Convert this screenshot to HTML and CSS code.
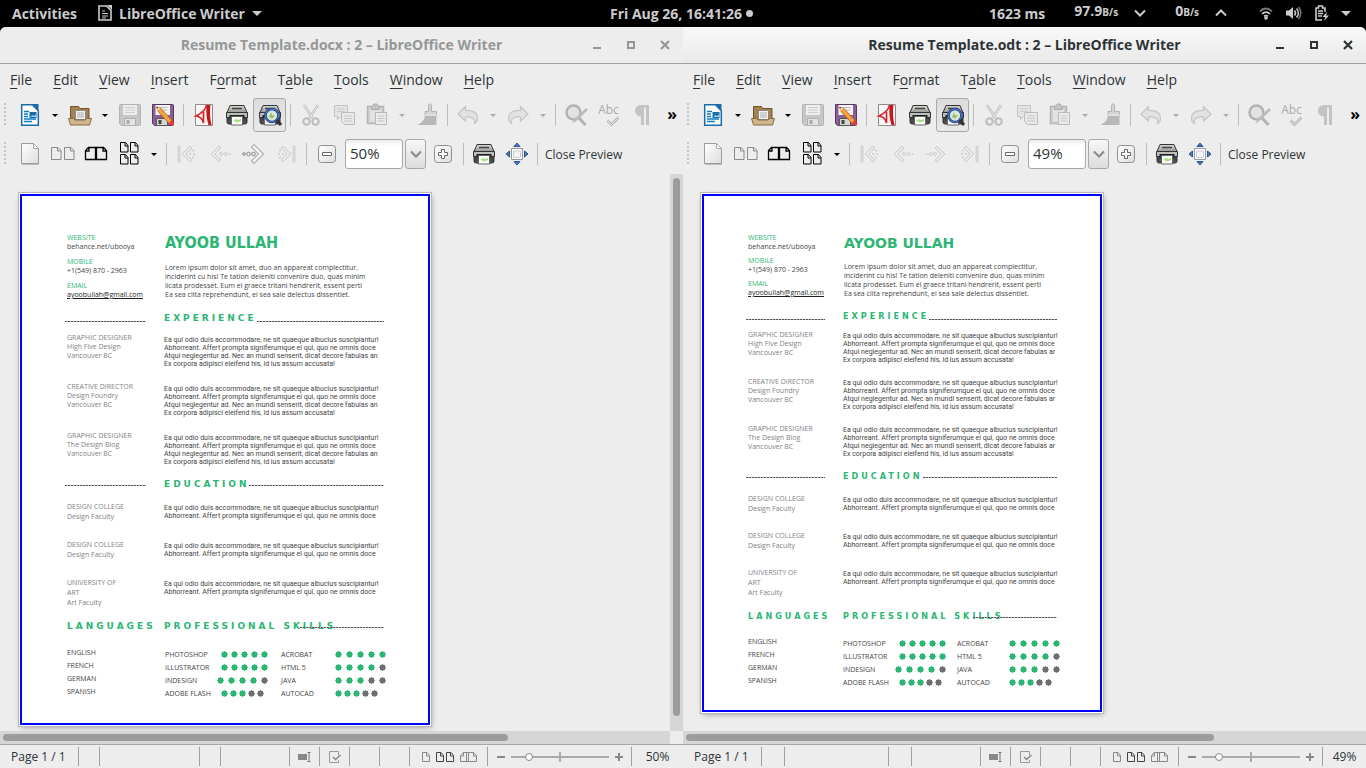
FILE: index.html
```
<!DOCTYPE html>
<html lang="en">
<head>
  <meta charset="UTF-8" />
  <title>Resume Template - LibreOffice Writer</title>
  <link rel="stylesheet" href="styles.css">
</head>
<body>
  <!-- Icon sprite, shared by both windows -->
  <svg class="sprite" aria-hidden="true">
    <defs>
      <linearGradient id="gPaper" x1="0" y1="0" x2="1" y2="1"><stop offset="0" stop-color="#fff"/><stop offset="1" stop-color="#ddd"/></linearGradient>
      <linearGradient id="gPrinter" x1="0" y1="0" x2="0" y2="1"><stop offset="0" stop-color="#d8d8d4"/><stop offset=".45" stop-color="#8a8c86"/><stop offset=".5" stop-color="#333"/><stop offset="1" stop-color="#555"/></linearGradient>
    </defs>
    <symbol id="i-new" viewBox="0 0 24 24">
      <path d="M3.7 1.7h10.600l6 6v14.600H3.700z" fill="#fff" stroke="#1b6ca8" stroke-width="1.500"/>
      <path d="M14 1h6.500v7z" fill="#1b6ca8"/>
      <path d="M6 8.500h5M6 11h4M6 13.500h4M6 16h12M6 18.500h8" stroke="#0c7fc4" stroke-width="1.300"/>
      <path d="M11.500 9h7v6h-7z" fill="#1b6ca8"/><path d="M12.500 14l2-2 1.500 1 2-1.500v2.500z" fill="#9fd3f2"/>
    </symbol>
    <symbol id="i-open" viewBox="0 0 24 24">
      <path d="M2.500 18V3.500h8l1.500 2h9V18z" fill="#a5814f" stroke="#6f5430"/>
      <path d="M7.500 7.500h10v9h-10z" fill="#f4f4f4" stroke="#888"/>
      <path d="M9 10h7M9 12h7M9 14h7" stroke="#aaa"/>
      <path d="M.5 15.500h5l1.500 1.500h10l1.500-1.500h5l-2 6.500h-19z" fill="#d1b48d" stroke="#8a6c42"/>
    </symbol>
    <symbol id="i-save" viewBox="0 0 24 24">
      <path d="M2.500 1.500h19a1 1 0 0 1 1 1v19a1 1 0 0 1-1 1h-18l-2-2v-18a1 1 0 0 1 1-1z" fill="#c6c6c6" stroke="#b3b3b3"/>
      <path d="M5 2h14v10H5z" fill="#ededed"/><path d="M7 4.500h10M7 7h10M7 9.500h10" stroke="#cfcfcf"/>
      <path d="M6.500 15.500h11v7h-11z" fill="#e4e4e4" stroke="#b0b0b0"/><path d="M8.500 17h3v4h-3z" fill="#a9a9a9"/>
    </symbol>
    <symbol id="i-saveas" viewBox="0 0 24 24">
      <path d="M1.500 1.500h20a1 1 0 0 1 1 1v19a1 1 0 0 1-1 1h-18l-2-2z" fill="#875f95" stroke="#5c3566"/>
      <path d="M4.500 2h14.500v10H4.500z" fill="#f4f4f4"/><path d="M6.500 4.500h10M6.500 7h10" stroke="#bbb"/>
      <path d="M5.500 15.500h11v7h-11z" fill="#d3d7cf" stroke="#555"/><path d="M7.500 17h3v4h-3z" fill="#444"/>
      <path d="M5.500 4l4.500 1.500L22 18.500 19.500 22 7.500 9z" fill="#f8a13c" stroke="#b35d0c" stroke-width=".8"/>
      <path d="M5.500 4l3.800 1.200L6.700 8z" fill="#f5deb3"/><path d="M5.500 4l1.600.5-1.100 1.200z"/>
      <path d="M20.500 17l2.800 3-1.300 2.500h-2.500L18 20z" fill="#e23b3b"/>
    </symbol>
    <symbol id="i-pdf" viewBox="0 0 24 24">
      <path d="M3.500 1.500h17v21h-17z" fill="#f7f7f7" stroke="#8c8c8c"/>
      <path d="M14.500 2C14 6.500 11 9.500 4 13c4 .500 6.500 3 7.500 7V9" fill="none" stroke="#d9252a" stroke-width="1.700"/>
      <path d="M14.500 2h4c-1 6-.5 14 1 20h-3C14.500 16 14 9 14.500 2z" fill="#c9161c"/>
    </symbol>
    <symbol id="i-print" viewBox="0 0 24 24">
      <path d="M5 2.500h14l3 7v9.500a2 2 0 0 1-2 2H4a2 2 0 0 1-2-2V9.500z" fill="url(#gPrinter)" stroke="#333"/>
      <path d="M1.500 9.500h21v5h-21z" fill="#bbbdb6" stroke="#2e3436"/>
      <path d="M7 5.500h10" stroke="#444" stroke-width="1.500"/><path d="M4.500 12h15v2.500h-15z" fill="#222"/>
      <path d="M6.500 13.500h11v8.500h-11z" fill="#fafcf8" stroke="#666"/><path d="M8.500 17.500l3-1.500 1.500 1 3-1v2l-4 1.500z" fill="#a6db82"/>
    </symbol>
    <symbol id="i-preview" viewBox="0 0 24 24">
      <use href="#i-print"/>
      <circle cx="14" cy="12.500" r="6.500" fill="#dbe6d4" stroke="#20408f" stroke-width="2.600"/>
      <circle cx="14" cy="12.500" r="6.500" fill="none" stroke="#6b90d8" stroke-width=".8"/>
      <path d="M11 14l2-4.500 1.500 3 2.500-.5-2.500 3.500z" fill="#8cc466"/>
      <path d="M18.500 17l4.500 5" stroke="#333" stroke-width="3"/>
    </symbol>
    <symbol id="i-cut" viewBox="0 0 24 24">
      <path d="M5 2l8.500 13M19 2l-8.500 13" stroke="#c2c2c2" stroke-width="2.600"/><path d="M5 2l8.500 13M19 2l-8.500 13" stroke="#e6e6e6"/>
      <circle cx="7.500" cy="18.500" r="3.200" fill="none" stroke="#bbb" stroke-width="2"/><circle cx="16.500" cy="18.500" r="3.200" fill="none" stroke="#bbb" stroke-width="2"/>
    </symbol>
    <symbol id="i-copy" viewBox="0 0 24 24">
      <path d="M2.500 2.500h13v11h-7l-3 3v-3h-3z" fill="#e4e4e4" stroke="#c2c2c2"/><path d="M5 6h8M5 8.500h8" stroke="#c8c8c8"/>
      <path d="M9.500 9.500h13v12h-10l-3-3z" fill="#e8e8e8" stroke="#bcbcbc"/><path d="M12 13h8M12 15.500h8M12 18h8" stroke="#c8c8c8"/>
    </symbol>
    <symbol id="i-paste" viewBox="0 0 24 24">
      <path d="M2.500 3.500h16v17h-16z" fill="#d0d0d0" stroke="#b5b5b5" stroke-width="1.500"/>
      <path d="M5 5.500h11v13H5z" fill="#e2e2e2"/><path d="M6.500 3.500c1-1 2-1 2.500-2.500h3c.5 1.500 1.500 1.500 2.500 2.500v3h-8z" fill="#c4c4c4" stroke="#aaa"/>
      <path d="M10.500 9.500h11v12h-11z" fill="#ececec" stroke="#b8b8b8"/><path d="M12.500 13h7M12.500 15.500h7M12.500 18h7" stroke="#c4c4c4"/>
    </symbol>
    <symbol id="i-brush" viewBox="0 0 24 24">
      <path d="M13.500 2.500c0-2 3-2 3 0v6h5v4H10v-4h3.500z" fill="#d4d4d4" stroke="#b2b2b2"/>
      <path d="M10 12.500h11.500v9.500H2.500c4-2 7-5 7.500-9.500z" fill="#b8b8b8"/><path d="M10 12h11.500" stroke="#e8e8e8" stroke-width="1.500"/>
    </symbol>
    <symbol id="i-undo" viewBox="0 0 24 24">
      <path d="M9.500 3.500v4c7-.500 12 2 12 8 0 2.500-1 4-3 5 1.500-5-3-7-9-6.500v4L2 11z" fill="#e2e2e2" stroke="#c5c5c5" stroke-width="1.200"/>
    </symbol>
    <symbol id="i-find" viewBox="0 0 24 24">
      <circle cx="9.500" cy="9.500" r="7" fill="#e2e2e2" stroke="#b2b2b2" stroke-width="2.500"/>
      <path d="M15 15l6.500 7" stroke="#b2b2b2" stroke-width="3"/><path d="M22 5L11 16l-3 5 5-3.500L24 7z" fill="#bcbcbc"/>
    </symbol>
    <symbol id="i-tick" viewBox="0 0 14 11"><path d="M1.500 4.500l4 4 7-7" fill="none" stroke="#b9b9b9" stroke-width="2.800"/><path d="M1.500 4.500l4 4 7-7" fill="none" stroke="#e4e4e4"/></symbol>
    <symbol id="i-pilcrow" viewBox="0 0 24 24"><path d="M19 2v20h-3V4.500h-2V22h-3V13.500C3 13.500 3 2 11 2z" fill="#c3c3c3"/></symbol>
    <symbol id="i-page" viewBox="0 0 24 24">
      <path d="M3.500 1.500h12l5 5v15h-17z" fill="url(#gPaper)" stroke="#9c9c9c"/><path d="M15.500 1.500v5h5z" fill="#fff" stroke="#aaa"/><path d="M4 22.500h17" stroke="#bbb"/>
    </symbol>
    <symbol id="i-two" viewBox="0 0 24 24">
      <path d="M.5 5.500h6.500l3 3v9H.5zM13.500 5.500H20l3 3v9h-9.500zM6.500 5.500v3.500h3.500M19.500 5.500v3.500H23" fill="none" stroke="currentColor"/>
    </symbol>
    <symbol id="i-book" viewBox="0 0 24 24">
      <path d="M11.500 5.500H4.500l-3 3v9h10zM12.500 5.500h7l3 3v9h-10zM5 5.500v3.500H1.500M19 5.500v3.500h3.500" fill="none" stroke="#000" stroke-width="1.300"/>
    </symbol>
    <symbol id="i-four" viewBox="0 0 24 24">
      <path d="M3.500.5h5l2.500 3v6.500H3.500zM13.500.5h5l2.500 3v6.500h-7.500zM3.500 12.500h5l2.500 3V22H3.500zM13.500 12.500h5l2.500 3V22h-7.500zM8 .5V4h3M18 .5V4h3M8 12.500V16h3M18 12.500V16h3" fill="none" stroke="#000"/>
    </symbol>
    <symbol id="i-first" viewBox="0 0 24 24">
      <path d="M3 4h2v16H3z" fill="#ddd" stroke="#ccc" stroke-width=".8"/>
      <path d="M15 4l-8 8 8 8 2-2-6-6 6-6z" fill="#e8e8e8" stroke="#ccc"/>
      <path d="M15 12h.1M19 12h.1M18 8.500h.1M18 15.500h.1" stroke="#ccc" stroke-width="2" stroke-linecap="round"/>
    </symbol>
    <symbol id="i-prev" viewBox="0 0 24 24">
      <path d="M11 4l-8 8 8 8 2-2-6-6 6-6z" fill="#e8e8e8" stroke="#ccc"/>
      <circle cx="13" cy="12" r="1.500" fill="none" stroke="#ccc"/><circle cx="17.500" cy="12" r="1.500" fill="none" stroke="#ccc"/><circle cx="21.500" cy="12" r="1" fill="#ccc"/>
    </symbol>
    <symbol id="i-next" viewBox="0 0 24 24">
      <path d="M13 2.500l9.500 9.500-9.500 9.500-2.500-2.500 7-7-7-7z" fill="#f4f4f4" stroke="currentColor"/>
      <circle cx="3" cy="12" r="1.300" fill="none" stroke="currentColor"/><circle cx="7.500" cy="12" r="1.800" fill="none" stroke="currentColor"/><circle cx="12.500" cy="12" r="1.800" fill="none" stroke="currentColor"/>
    </symbol>
    <symbol id="i-minus" viewBox="0 0 20 20">
      <rect x="1.500" y="1.500" width="17" height="17" rx="3" fill="url(#gPaper)" stroke="#8f8f8f"/><path d="M5.500 8.500h9v3h-9z" fill="#fff" stroke="#666"/>
    </symbol>
    <symbol id="i-plus" viewBox="0 0 20 20">
      <rect x="1.500" y="1.500" width="17" height="17" rx="3" fill="url(#gPaper)" stroke="#8f8f8f"/>
      <path d="M8.500 5.500h3v3h3v3h-3v3h-3v-3h-3v-3h3z" fill="#fff" stroke="#666"/>
    </symbol>
    <symbol id="i-fit" viewBox="0 0 24 24">
      <path d="M6.500 6.500h11v11h-11z" fill="#fff" stroke="#999"/><path d="M8.500 9h7v6.500h-7z" fill="#f4f4f4" stroke="#ccc"/>
      <path d="M12 1l3 3.500H9zM12 23l3-3.500H9zM1 12l3.500-3v6zM23 12l-3.500-3v6z" fill="#4b78b8" stroke="#2c5594" stroke-linejoin="round"/>
    </symbol>
    <symbol id="i-chevron" viewBox="0 0 12 12"><path d="M1 3.500l5 5 5-5" fill="none" stroke="currentColor" stroke-width="2"/></symbol>
    <symbol id="i-star" viewBox="0 0 10 10"><path d="M5 0l1.300 1.200L8.500 1.500l.3 2.200L10 5 8.800 6.300l-.3 2.200-2.200.3L5 10 3.700 8.800l-2.200-.3-.3-2.200L0 5l1.200-1.300.3-2.200 2.200-.3z" fill="currentColor"/></symbol>
    <symbol id="s-insert" viewBox="0 0 13 12"><path d="M0 3h9v6H0z" fill="#888"/><path d="M9.500 1.500h3M11 1.500v9M9.500 10.500h3" stroke="#777"/></symbol>
    <symbol id="s-sign" viewBox="0 0 12 12"><path d="M9.500 4V.500h-9v11h9V9" fill="none" stroke="#999"/><path d="M4 6l2.500 2.500L11.500 4" fill="none" stroke="#888" stroke-width="1.500"/></symbol>
    <symbol id="s-page" viewBox="0 0 8 10"><path d="M.5.500H5l2.500 3v6h-7zM4.500.500V4h3" fill="none" stroke="currentColor"/></symbol>
    <symbol id="s-book" viewBox="0 0 17 10"><path d="M8.500.500H3.500L.5 3.500v6h8zM8.500.500h5l3 3v6h-8zM3.500.500V4H.5M13.500.500V4h3M6.500 0v10" fill="none" stroke="currentColor"/></symbol>
  </svg>

  <!-- GNOME top bar -->
  <header class="topbar">
    <div class="topbar-left">
      <button>Activities</button>
      <button class="app-menu">
        <svg width="14" height="16" viewBox="0 0 14 16"><path d="M1 1h7.500L13 5.500V15H1z" fill="none" stroke="#ccc" stroke-width="1.600"/><path d="M9 0h5v5z" fill="#ccc"/><path d="M4 6h3M4 8.500h6M4 11h6M4 13h4" stroke="#ccc"/></svg>
        LibreOffice Writer
        <span class="caret"></span>
      </button>
    </div>
    <button class="clock">Fri Aug 26, 16:41:26<span class="clock-dot"></span></button>
    <div class="topbar-right">
      <span>1623 ms</span>
      <span class="net down">97.9<small>B/s</small></span>
      <svg width="12" height="12"><use href="#i-chevron"/></svg>
      <span class="net up">0<small>B/s</small></span>
      <svg class="flip" width="12" height="12"><use href="#i-chevron"/></svg>
      <svg class="wifi" width="14" height="14" viewBox="0 0 14 14"><path d="M1 5.500c3.500-4 8.500-4 12 0" fill="none" stroke="#777" stroke-width="1.800"/><path d="M3 8c2.500-2.500 5.500-2.500 8 0M5 10.300c1.300-1 2.700-1 4 0" fill="none" stroke="#ccc" stroke-width="1.600"/><circle cx="7" cy="12" r="1.800" fill="#ccc"/></svg>
      <svg class="volume" width="16" height="14" viewBox="0 0 16 14"><path d="M0 4.500h3L7 1v12L3 9.500H0z" fill="#ccc"/><path d="M8.500 4.500c1.300 1.500 1.300 3.500 0 5M10.500 2.500c2.500 2.500 2.500 6.500 0 9" fill="none" stroke="#ccc" stroke-width="1.500"/><path d="M12.500 1c3 3.500 3 8.500 0 12" fill="none" stroke="#777" stroke-width="1.500"/></svg>
      <svg class="battery" width="15" height="16" viewBox="0 0 15 16"><path d="M7 15H1V3h2.500V1h4v2H10v4" fill="none" stroke="#ccc" stroke-width="1.600"/><path d="M3 6h5M3 8.500h5M3 11h4" stroke="#ccc" stroke-width="1.400"/><path d="M12.500 6.500L7.500 12h3l-1.500 4 5-5.500h-3z" fill="#ccc"/></svg>
      <span class="caret"></span>
    </div>
  </header>

  <main class="desktop">
    <!-- Left window: docx -->
    <section class="window inactive">
      <div class="titlebar">
        <h1>Resume Template.docx : 2 – LibreOffice Writer</h1>
        <div class="window-controls">
          <button class="minimize" aria-label="Minimize"></button>
          <button class="maximize" aria-label="Maximize"></button>
          <button aria-label="Close"><svg width="10" height="10" viewBox="0 0 10 10"><path d="M1 1l8 8M9 1L1 9" stroke="currentColor" stroke-width="2.200"/></svg></button>
        </div>
      </div>
      <nav class="menubar">
        <button><u>F</u>ile</button><button><u>E</u>dit</button><button><u>V</u>iew</button><button><u>I</u>nsert</button><button>F<u>o</u>rmat</button><button>T<u>a</u>ble</button><button><u>T</u>ools</button><button><u>W</u>indow</button><button><u>H</u>elp</button>
      </nav>
      <div class="toolbar">
        <span class="grip"></span>
        <button class="tool" aria-label="New"><svg><use href="#i-new"/></svg></button>
        <button class="drop" aria-label="New menu"></button>
        <button class="tool" aria-label="Open"><svg><use href="#i-open"/></svg></button>
        <button class="drop" aria-label="Open menu"></button>
        <button class="tool" aria-label="Save"><svg><use href="#i-save"/></svg></button>
        <button class="tool" aria-label="Save As"><svg><use href="#i-saveas"/></svg></button>
        <span class="sep"></span>
        <button class="tool" aria-label="Export as PDF"><svg><use href="#i-pdf"/></svg></button>
        <button class="tool" aria-label="Print"><svg><use href="#i-print"/></svg></button>
        <button class="tool pressed" aria-label="Print Preview"><svg><use href="#i-preview"/></svg></button>
        <span class="sep"></span>
        <button class="tool" aria-label="Cut"><svg><use href="#i-cut"/></svg></button>
        <button class="tool" aria-label="Copy"><svg><use href="#i-copy"/></svg></button>
        <button class="tool" aria-label="Paste"><svg><use href="#i-paste"/></svg></button>
        <button class="drop off" aria-label="Paste menu"></button>
        <button class="tool" aria-label="Clone Formatting"><svg><use href="#i-brush"/></svg></button>
        <span class="sep"></span>
        <button class="tool" aria-label="Undo"><svg><use href="#i-undo"/></svg></button>
        <button class="drop off" aria-label="Undo menu"></button>
        <button class="tool mirror" aria-label="Redo"><svg><use href="#i-undo"/></svg></button>
        <button class="drop off" aria-label="Redo menu"></button>
        <span class="sep"></span>
        <button class="tool" aria-label="Find"><svg><use href="#i-find"/></svg></button>
        <button class="tool spell">Abc<svg><use href="#i-tick"/></svg></button>
        <button class="tool" aria-label="Formatting Marks"><svg><use href="#i-pilcrow"/></svg></button>
        <button class="more">»</button>
      </div>
      <div class="toolbar preview-bar">
        <span class="grip"></span>
        <button class="tool" aria-label="Single Page"><svg><use href="#i-page"/></svg></button>
        <button class="tool grey" aria-label="Two Pages"><svg><use href="#i-two"/></svg></button>
        <button class="tool" aria-label="Book Preview"><svg><use href="#i-book"/></svg></button>
        <button class="tool" aria-label="Multiple Pages"><svg><use href="#i-four"/></svg></button>
        <button class="drop" aria-label="Pages menu"></button>
        <span class="sep"></span>
        <button class="tool" aria-label="First Page"><svg><use href="#i-first"/></svg></button>
        <button class="tool" aria-label="Previous Page"><svg><use href="#i-prev"/></svg></button>
        <button class="tool grey" aria-label="Next Page"><svg><use href="#i-next"/></svg></button>
        <button class="tool mirror" aria-label="Last Page"><svg><use href="#i-first"/></svg></button>
        <span class="sep"></span>
        <button class="tool small" aria-label="Zoom Out"><svg><use href="#i-minus"/></svg></button>
        <div class="zoom-box">
          <input type="text" value="50%" aria-label="Zoom" />
          <button aria-label="Zoom levels"><svg width="12" height="12"><use href="#i-chevron"/></svg></button>
        </div>
        <button class="tool small" aria-label="Zoom In"><svg><use href="#i-plus"/></svg></button>
        <span class="sep"></span>
        <button class="tool" aria-label="Print Page"><svg><use href="#i-print"/></svg></button>
        <button class="tool" aria-label="Full Screen"><svg><use href="#i-fit"/></svg></button>
        <span class="sep"></span>
        <button class="close-preview">Close Preview</button>
      </div>

      <div class="view">
        <div class="canvas">
          <article class="paper">
            <div class="row intro">
              <div class="side contact">
                <p><b>WEBSITE</b><br>behance.net/ubooya</p>
                <p><b>MOBILE</b><br>+1(549) 870 - 2963</p>
                <p><b>EMAIL</b><br><a href="#">ayoobullah@gmail.com</a></p>
              </div>
              <div class="about">
                <h2>AYOOB ULLAH</h2>
                <p>Lorem ipsum dolor sit amet, duo an appareat complectitur,<br>inciderint cu his! Te tation deleniti convenire duo, quas minim<br>licata prodesset. Eum ei graece tritani hendrerit, essent perti<br>Ea sea clita reprehendunt, ei sea sale delectus dissentiet.</p>
              </div>
            </div>
            <div class="row heading">
              <span class="rule"></span>
              <h3>EXPERIENCE<span class="rule"></span></h3>
            </div>
            <div class="row job">
              <p class="side">GRAPHIC DESIGNER<br>High Five Design<br>Vancouver BC</p>
              <p class="text">Ea qui odio duis accommodare, ne sit quaeque albucius suscipiantur!<br>Abhorreant. Affert prompta signiferumque ei qui, quo ne omnis doce<br>Atqui neglegentur ad. Nec an mundi senserit, dicat decore fabulas an<br>Ex corpora adipisci eleifend his, id ius assum accusata!</p>
            </div>
            <div class="row job">
              <p class="side">CREATIVE DIRECTOR<br>Design Foundry<br>Vancouver BC</p>
              <p class="text">Ea qui odio duis accommodare, ne sit quaeque albucius suscipiantur!<br>Abhorreant. Affert prompta signiferumque ei qui, quo ne omnis doce<br>Atqui neglegentur ad. Nec an mundi senserit, dicat decore fabulas an<br>Ex corpora adipisci eleifend his, id ius assum accusata!</p>
            </div>
            <div class="row job">
              <p class="side">GRAPHIC DESIGNER<br>The Design Blog<br>Vancouver BC</p>
              <p class="text">Ea qui odio duis accommodare, ne sit quaeque albucius suscipiantur!<br>Abhorreant. Affert prompta signiferumque ei qui, quo ne omnis doce<br>Atqui neglegentur ad. Nec an mundi senserit, dicat decore fabulas an<br>Ex corpora adipisci eleifend his, id ius assum accusata!</p>
            </div>
            <div class="row heading education-heading">
              <span class="rule"></span>
              <h3>EDUCATION<span class="rule"></span></h3>
            </div>
            <div class="row school">
              <p class="side">DESIGN COLLEGE<br>Design Faculty</p>
              <p class="text">Ea qui odio duis accommodare, ne sit quaeque albucius suscipiantur!<br>Abhorreant. Affert prompta signiferumque ei qui, quo ne omnis doce</p>
            </div>
            <div class="row school">
              <p class="side">DESIGN COLLEGE<br>Design Faculty</p>
              <p class="text">Ea qui odio duis accommodare, ne sit quaeque albucius suscipiantur!<br>Abhorreant. Affert prompta signiferumque ei qui, quo ne omnis doce</p>
            </div>
            <div class="row school">
              <p class="side">UNIVERSITY OF<br>ART<br>Art Faculty</p>
              <p class="text">Ea qui odio duis accommodare, ne sit quaeque albucius suscipiantur!<br>Abhorreant. Affert prompta signiferumque ei qui, quo ne omnis doce</p>
            </div>
            <div class="row heading skills-heading">
              <h3 class="side">LANGUAGES</h3>
              <h3>PROFESSIONAL SKILLS<span class="rule"></span></h3>
            </div>
            <div class="row">
              <ul class="side languages"><li>ENGLISH</li><li>FRENCH</li><li>GERMAN</li><li>SPANISH</li></ul>
              <div class="skills">
                <span>PHOTOSHOP</span><span class="stars"><svg><use href="#i-star"/></svg><svg><use href="#i-star"/></svg><svg><use href="#i-star"/></svg><svg><use href="#i-star"/></svg><svg><use href="#i-star"/></svg></span>
                <span>ACROBAT</span><span class="stars wide"><svg><use href="#i-star"/></svg><svg><use href="#i-star"/></svg><svg><use href="#i-star"/></svg><svg><use href="#i-star"/></svg><svg><use href="#i-star"/></svg></span>
                <span>ILLUSTRATOR</span><span class="stars"><svg><use href="#i-star"/></svg><svg><use href="#i-star"/></svg><svg><use href="#i-star"/></svg><svg><use href="#i-star"/></svg><svg><use href="#i-star"/></svg></span>
                <span>HTML 5</span><span class="stars wide"><svg><use href="#i-star"/></svg><svg><use href="#i-star"/></svg><svg><use href="#i-star"/></svg><svg><use href="#i-star"/></svg><svg class="dim"><use href="#i-star"/></svg></span>
                <span>INDESIGN</span><span class="stars wide"><svg><use href="#i-star"/></svg><svg><use href="#i-star"/></svg><svg><use href="#i-star"/></svg><svg><use href="#i-star"/></svg><svg class="dim"><use href="#i-star"/></svg></span>
                <span>JAVA</span><span class="stars wide"><svg><use href="#i-star"/></svg><svg><use href="#i-star"/></svg><svg><use href="#i-star"/></svg><svg class="dim"><use href="#i-star"/></svg><svg class="dim"><use href="#i-star"/></svg></span>
                <span>ADOBE FLASH</span><span class="stars tight"><svg><use href="#i-star"/></svg><svg><use href="#i-star"/></svg><svg><use href="#i-star"/></svg><svg class="dim"><use href="#i-star"/></svg><svg class="dim"><use href="#i-star"/></svg></span>
                <span>AUTOCAD</span><span class="stars tight"><svg><use href="#i-star"/></svg><svg><use href="#i-star"/></svg><svg><use href="#i-star"/></svg><svg class="dim"><use href="#i-star"/></svg><svg class="dim"><use href="#i-star"/></svg></span>
              </div>
            </div>
          </article>
        </div>
        <div class="scroll-v"><span></span></div>
        <div class="scroll-h"><span></span></div>
      </div>

      <footer class="statusbar">
        <span class="cell page-count">Page 1 / 1</span>
        <span class="cell narrow"></span>
        <span class="cell fill"></span>
        <span class="cell narrow"></span>
        <span class="cell language"></span>
        <span class="cell"><svg width="13" height="12"><use href="#s-insert"/></svg></span>
        <span class="cell"><svg width="12" height="12"><use href="#s-sign"/></svg></span>
        <span class="cell"></span>
        <span class="cell"></span>
        <span class="cell layout">
          <svg width="8" height="10"><use href="#s-page"/></svg>
          <span class="current"><svg width="8" height="10"><use href="#s-page"/></svg><svg width="8" height="10"><use href="#s-page"/></svg></span>
          <svg width="17" height="10"><use href="#s-book"/></svg>
        </span>
        <span class="cell zoom-slider">
          <button class="zoom-out" aria-label="Zoom out"></button>
          <input type="range" min="0" max="100" value="16" aria-label="Zoom factor" />
          <button class="zoom-in" aria-label="Zoom in"></button>
        </span>
        <span class="cell percent">50%</span>
      </footer>
    </section>

    <!-- Right window: odt -->
    <section class="window">
      <div class="titlebar">
        <h1>Resume Template.odt : 2 – LibreOffice Writer</h1>
        <div class="window-controls">
          <button class="minimize" aria-label="Minimize"></button>
          <button class="maximize" aria-label="Maximize"></button>
          <button aria-label="Close"><svg width="10" height="10" viewBox="0 0 10 10"><path d="M1 1l8 8M9 1L1 9" stroke="currentColor" stroke-width="2.200"/></svg></button>
        </div>
      </div>
      <nav class="menubar">
        <button><u>F</u>ile</button><button><u>E</u>dit</button><button><u>V</u>iew</button><button><u>I</u>nsert</button><button>F<u>o</u>rmat</button><button>T<u>a</u>ble</button><button><u>T</u>ools</button><button><u>W</u>indow</button><button><u>H</u>elp</button>
      </nav>
      <div class="toolbar">
        <span class="grip"></span>
        <button class="tool" aria-label="New"><svg><use href="#i-new"/></svg></button>
        <button class="drop" aria-label="New menu"></button>
        <button class="tool" aria-label="Open"><svg><use href="#i-open"/></svg></button>
        <button class="drop" aria-label="Open menu"></button>
        <button class="tool" aria-label="Save"><svg><use href="#i-save"/></svg></button>
        <button class="tool" aria-label="Save As"><svg><use href="#i-saveas"/></svg></button>
        <span class="sep"></span>
        <button class="tool" aria-label="Export as PDF"><svg><use href="#i-pdf"/></svg></button>
        <button class="tool" aria-label="Print"><svg><use href="#i-print"/></svg></button>
        <button class="tool pressed" aria-label="Print Preview"><svg><use href="#i-preview"/></svg></button>
        <span class="sep"></span>
        <button class="tool" aria-label="Cut"><svg><use href="#i-cut"/></svg></button>
        <button class="tool" aria-label="Copy"><svg><use href="#i-copy"/></svg></button>
        <button class="tool" aria-label="Paste"><svg><use href="#i-paste"/></svg></button>
        <button class="drop off" aria-label="Paste menu"></button>
        <button class="tool" aria-label="Clone Formatting"><svg><use href="#i-brush"/></svg></button>
        <span class="sep"></span>
        <button class="tool" aria-label="Undo"><svg><use href="#i-undo"/></svg></button>
        <button class="drop off" aria-label="Undo menu"></button>
        <button class="tool mirror" aria-label="Redo"><svg><use href="#i-undo"/></svg></button>
        <button class="drop off" aria-label="Redo menu"></button>
        <span class="sep"></span>
        <button class="tool" aria-label="Find"><svg><use href="#i-find"/></svg></button>
        <button class="tool spell">Abc<svg><use href="#i-tick"/></svg></button>
        <button class="tool" aria-label="Formatting Marks"><svg><use href="#i-pilcrow"/></svg></button>
        <button class="more">»</button>
      </div>
      <div class="toolbar preview-bar">
        <span class="grip"></span>
        <button class="tool" aria-label="Single Page"><svg><use href="#i-page"/></svg></button>
        <button class="tool grey" aria-label="Two Pages"><svg><use href="#i-two"/></svg></button>
        <button class="tool" aria-label="Book Preview"><svg><use href="#i-book"/></svg></button>
        <button class="tool" aria-label="Multiple Pages"><svg><use href="#i-four"/></svg></button>
        <button class="drop" aria-label="Pages menu"></button>
        <span class="sep"></span>
        <button class="tool" aria-label="First Page"><svg><use href="#i-first"/></svg></button>
        <button class="tool" aria-label="Previous Page"><svg><use href="#i-prev"/></svg></button>
        <button class="tool mirror" aria-label="Next Page"><svg><use href="#i-prev"/></svg></button>
        <button class="tool mirror" aria-label="Last Page"><svg><use href="#i-first"/></svg></button>
        <span class="sep"></span>
        <button class="tool small" aria-label="Zoom Out"><svg><use href="#i-minus"/></svg></button>
        <div class="zoom-box">
          <input type="text" value="49%" aria-label="Zoom" />
          <button aria-label="Zoom levels"><svg width="12" height="12"><use href="#i-chevron"/></svg></button>
        </div>
        <button class="tool small" aria-label="Zoom In"><svg><use href="#i-plus"/></svg></button>
        <span class="sep"></span>
        <button class="tool" aria-label="Print Page"><svg><use href="#i-print"/></svg></button>
        <button class="tool" aria-label="Full Screen"><svg><use href="#i-fit"/></svg></button>
        <span class="sep"></span>
        <button class="close-preview">Close Preview</button>
      </div>

      <div class="view">
        <div class="canvas">
          <article class="paper paper-49">
            <div class="row intro">
              <div class="side contact">
                <p><b>WEBSITE</b><br>behance.net/ubooya</p>
                <p><b>MOBILE</b><br>+1(549) 870 - 2963</p>
                <p><b>EMAIL</b><br><a href="#">ayoobullah@gmail.com</a></p>
              </div>
              <div class="about">
                <h2>AYOOB ULLAH</h2>
                <p>Lorem ipsum dolor sit amet, duo an appareat complectitur,<br>inciderint cu his! Te tation deleniti convenire duo, quas minim<br>licata prodesset. Eum ei graece tritani hendrerit, essent perti<br>Ea sea clita reprehendunt, ei sea sale delectus dissentiet.</p>
              </div>
            </div>
            <div class="row heading">
              <span class="rule"></span>
              <h3>EXPERIENCE<span class="rule"></span></h3>
            </div>
            <div class="row job">
              <p class="side">GRAPHIC DESIGNER<br>High Five Design<br>Vancouver BC</p>
              <p class="text">Ea qui odio duis accommodare, ne sit quaeque albucius suscipiantur!<br>Abhorreant. Affert prompta signiferumque ei qui, quo ne omnis doce<br>Atqui neglegentur ad. Nec an mundi senserit, dicat decore fabulas ar<br>Ex corpora adipisci eleifend his, id ius assum accusata!</p>
            </div>
            <div class="row job">
              <p class="side">CREATIVE DIRECTOR<br>Design Foundry<br>Vancouver BC</p>
              <p class="text">Ea qui odio duis accommodare, ne sit quaeque albucius suscipiantur!<br>Abhorreant. Affert prompta signiferumque ei qui, quo ne omnis doce<br>Atqui neglegentur ad. Nec an mundi senserit, dicat decore fabulas ar<br>Ex corpora adipisci eleifend his, id ius assum accusata!</p>
            </div>
            <div class="row job">
              <p class="side">GRAPHIC DESIGNER<br>The Design Blog<br>Vancouver BC</p>
              <p class="text">Ea qui odio duis accommodare, ne sit quaeque albucius suscipiantur!<br>Abhorreant. Affert prompta signiferumque ei qui, quo ne omnis doce<br>Atqui neglegentur ad. Nec an mundi senserit, dicat decore fabulas ar<br>Ex corpora adipisci eleifend his, id ius assum accusata!</p>
            </div>
            <div class="row heading education-heading">
              <span class="rule"></span>
              <h3>EDUCATION<span class="rule"></span></h3>
            </div>
            <div class="row school">
              <p class="side">DESIGN COLLEGE<br>Design Faculty</p>
              <p class="text">Ea qui odio duis accommodare, ne sit quaeque albucius suscipiantur!<br>Abhorreant. Affert prompta signiferumque ei qui, quo ne omnis doce</p>
            </div>
            <div class="row school">
              <p class="side">DESIGN COLLEGE<br>Design Faculty</p>
              <p class="text">Ea qui odio duis accommodare, ne sit quaeque albucius suscipiantur!<br>Abhorreant. Affert prompta signiferumque ei qui, quo ne omnis doce</p>
            </div>
            <div class="row school">
              <p class="side">UNIVERSITY OF<br>ART<br>Art Faculty</p>
              <p class="text">Ea qui odio duis accommodare, ne sit quaeque albucius suscipiantur!<br>Abhorreant. Affert prompta signiferumque ei qui, quo ne omnis doce</p>
            </div>
            <div class="row heading skills-heading">
              <h3 class="side">LANGUAGES</h3>
              <h3>PROFESSIONAL SKILLS<span class="rule"></span></h3>
            </div>
            <div class="row">
              <ul class="side languages"><li>ENGLISH</li><li>FRENCH</li><li>GERMAN</li><li>SPANISH</li></ul>
              <div class="skills">
                <span>PHOTOSHOP</span><span class="stars"><svg><use href="#i-star"/></svg><svg><use href="#i-star"/></svg><svg><use href="#i-star"/></svg><svg><use href="#i-star"/></svg><svg><use href="#i-star"/></svg></span>
                <span>ACROBAT</span><span class="stars wide"><svg><use href="#i-star"/></svg><svg><use href="#i-star"/></svg><svg><use href="#i-star"/></svg><svg><use href="#i-star"/></svg><svg><use href="#i-star"/></svg></span>
                <span>ILLUSTRATOR</span><span class="stars"><svg><use href="#i-star"/></svg><svg><use href="#i-star"/></svg><svg><use href="#i-star"/></svg><svg><use href="#i-star"/></svg><svg><use href="#i-star"/></svg></span>
                <span>HTML 5</span><span class="stars wide"><svg><use href="#i-star"/></svg><svg><use href="#i-star"/></svg><svg><use href="#i-star"/></svg><svg><use href="#i-star"/></svg><svg class="dim"><use href="#i-star"/></svg></span>
                <span>INDESIGN</span><span class="stars wide"><svg><use href="#i-star"/></svg><svg><use href="#i-star"/></svg><svg><use href="#i-star"/></svg><svg><use href="#i-star"/></svg><svg class="dim"><use href="#i-star"/></svg></span>
                <span>JAVA</span><span class="stars wide"><svg><use href="#i-star"/></svg><svg><use href="#i-star"/></svg><svg><use href="#i-star"/></svg><svg class="dim"><use href="#i-star"/></svg><svg class="dim"><use href="#i-star"/></svg></span>
                <span>ADOBE FLASH</span><span class="stars tight"><svg><use href="#i-star"/></svg><svg><use href="#i-star"/></svg><svg><use href="#i-star"/></svg><svg class="dim"><use href="#i-star"/></svg><svg class="dim"><use href="#i-star"/></svg></span>
                <span>AUTOCAD</span><span class="stars tight"><svg><use href="#i-star"/></svg><svg><use href="#i-star"/></svg><svg><use href="#i-star"/></svg><svg class="dim"><use href="#i-star"/></svg><svg class="dim"><use href="#i-star"/></svg></span>
              </div>
            </div>
          </article>
        </div>
        <div class="scroll-h"><span></span></div>
      </div>

      <footer class="statusbar statusbar-49">
        <span class="cell page-count">Page 1 / 1</span>
        <span class="cell narrow"></span>
        <span class="cell fill"></span>
        <span class="cell narrow"></span>
        <span class="cell language"></span>
        <span class="cell"><svg width="13" height="12"><use href="#s-insert"/></svg></span>
        <span class="cell"><svg width="12" height="12"><use href="#s-sign"/></svg></span>
        <span class="cell"></span>
        <span class="cell"></span>
        <span class="cell layout">
          <svg width="8" height="10"><use href="#s-page"/></svg>
          <span class="current"><svg width="8" height="10"><use href="#s-page"/></svg><svg width="8" height="10"><use href="#s-page"/></svg></span>
          <svg width="17" height="10"><use href="#s-book"/></svg>
        </span>
        <span class="cell zoom-slider">
          <button class="zoom-out" aria-label="Zoom out"></button>
          <input type="range" min="0" max="100" value="15" aria-label="Zoom factor" />
          <button class="zoom-in" aria-label="Zoom in"></button>
        </span>
        <span class="cell percent">49%</span>
      </footer>
    </section>
  </main>
</body>
</html>
```
FILE: styles.css
```
/********************************************************
 * Base
 ********************************************************/
*,
*::before {
  box-sizing: border-box;
}

body {
  margin: 0;
  height: 100vh;
  display: flex;
  flex-direction: column;
  overflow: hidden;
  background-color: #000;
  color: #2e3436;
  font-family: "Open Sans", "Noto Sans", sans-serif;
  font-size: 14px;
}

h1, h2, h3, p, ul {
  margin: 0;
  padding: 0;
}

ul {
  list-style: none;
}

button {
  margin: 0;
  padding: 0;
  border: none;
  background: none;
  color: inherit;
  font: inherit;
}

svg {
  display: block;
  flex: none;
}

.sprite {
  position: absolute;
  width: 0;
  height: 0;
}

/********************************************************
 * GNOME top bar
 ********************************************************/
.topbar {
  height: 27px;
  flex: none;
  display: grid;
  grid-template-columns: 1fr auto 1fr;
  align-items: center;
  padding: 0 15px 1px 12px;
  background-color: #000;
  color: #ccc;
  font-weight: 700;
  font-size: 14px;
  white-space: nowrap;
}

.topbar-left,
.topbar-right,
.app-menu,
.clock {
  display: flex;
  align-items: center;
}

.topbar-left {
  gap: 21px;
}

.app-menu {
  gap: 7px;
}

.topbar-right {
  justify-content: flex-end;
}

.caret {
  border: 5px solid transparent;
  border-top-color: #ccc;
  border-bottom: none;
}

.clock-dot {
  width: 7px;
  height: 7px;
  margin-left: 4px;
  border-radius: 50%;
  background-color: #ccc;
}

.net {
  padding-bottom: 5px;
  margin-left: 29px;
  margin-right: 16px;
}

.net small {
  font-size: 10px;
}

.flip {
  transform: scaleY(-1);
}

.wifi {
  margin-left: 32px;
}

.volume,
.battery {
  margin-left: 13px;
}

.topbar-right .caret {
  margin-left: 11px;
}

/********************************************************
 * Windows
 ********************************************************/
.desktop {
  flex: 1;
  min-height: 0;
  display: flex;
}

.window {
  flex: 1;
  min-width: 0;
  display: flex;
  flex-direction: column;
  background-color: #ededed;
  border-radius: 0 6px 0 0;
}

.window.inactive {
  border-radius: 6px 0 0 0;
}

.titlebar {
  height: 37px;
  flex: none;
  display: grid;
  grid-template-columns: 1fr auto 1fr;
  align-items: center;
  border-bottom: 1px solid #a1a1a1;
  background: linear-gradient(#f9f9f9, #e9e9e9);
  border-radius: inherit;
}

.titlebar h1 {
  grid-column: 2;
  font-size: 14px;
  font-weight: 700;
  line-height: 20px;
  padding-bottom: 1px;
  white-space: nowrap;
}

.inactive .titlebar {
  background: #ededed;
  color: #949796;
}

.window-controls {
  display: flex;
  justify-content: flex-end;
  padding-right: 1px;
}

.window-controls button {
  width: 34px;
  height: 24px;
  display: flex;
  align-items: center;
  justify-content: center;
}

.minimize::before {
  content: "";
  width: 8px;
  height: 2px;
  margin-top: 6px;
  background-color: currentColor;
}

.maximize::before {
  content: "";
  width: 8px;
  height: 8px;
  border: 2px solid currentColor;
}

.menubar {
  height: 32px;
  flex: none;
  display: flex;
  align-items: center;
  gap: 21px;
  padding: 0 0 2px 10px;
}

.menubar u {
  text-underline-offset: 3px;
}

/********************************************************
 * Toolbars
 ********************************************************/
.toolbar {
  height: 38px;
  flex: none;
  display: flex;
  align-items: center;
}

.preview-bar {
  height: 40px;
}

.grip {
  width: 2px;
  height: 24px;
  margin: 0 7px 0 4px;
  background: repeating-linear-gradient(#c4c4c4 0 2px, transparent 2px 4px);
}

.tool {
  width: 33px;
  height: 34px;
  display: flex;
  flex-direction: column;
  align-items: center;
  justify-content: center;
}

.tool svg {
  width: 24px;
  height: 24px;
}

.small svg {
  width: 20px;
  height: 20px;
}

.tool.pressed {
  border: 1px solid #a8a8a8;
  border-radius: 3px;
  background: linear-gradient(#dcdcdc, #e9e9e9);
}

.tool.grey {
  color: #8a8a8a;
}

.mirror svg {
  transform: scaleX(-1);
}

.spell {
  color: #aaa;
  font-size: 12px;
  line-height: 12px;
}

.spell svg {
  width: 14px;
  height: 11px;
  margin-left: 8px;
}

.drop {
  width: 17px;
  display: flex;
  justify-content: center;
}

.drop::before {
  content: "";
  border: 3px solid transparent;
  border-top-color: #000;
  border-bottom: none;
}

.drop.off::before {
  border-top-color: #aaa;
}

.sep {
  width: 1px;
  height: 22px;
  margin: 0 3px 0 4px;
  background-color: #bbb;
}

.more {
  margin-left: auto;
  padding: 0 6px 2px 0;
  color: #000;
  font-size: 16px;
  font-weight: 700;
}

.zoom-box {
  display: flex;
  gap: 2px;
  margin-left: 2px;
}

.zoom-box input {
  width: 58px;
  height: 30px;
  padding: 0 4px 2px;
  border: 1px solid #a8a8a8;
  border-radius: 3px;
  background: linear-gradient(#ebebeb, #fff 6px);
  color: #2e3436;
  font: inherit;
  font-size: 15px;
}

.zoom-box button {
  width: 21px;
  height: 30px;
  display: flex;
  align-items: center;
  justify-content: center;
  border: 1px solid #a8a8a8;
  border-radius: 3px;
  background: linear-gradient(#f7f7f7, #dcdcdc);
  color: #888;
}

.close-preview {
  padding-left: 4px;
  font-size: 12px;
}

/********************************************************
 * Preview area and scrollbars
 ********************************************************/
.view {
  flex: 1;
  min-height: 0;
  display: grid;
  grid-template-columns: 1fr auto;
  grid-template-rows: 1fr 13px;
}

.canvas {
  overflow: hidden;
  padding: 20px;
}

.window:not(.inactive) .canvas {
  padding-left: 19px;
}

.scroll-v {
  width: 13px;
  padding: 4px 3px 15px;
  background-color: #d6d6d6;
}

.scroll-h {
  grid-column: 1;
  padding: 3px;
  background-color: #d6d6d6;
}

.scroll-v span,
.scroll-h span {
  display: block;
  height: 100%;
  border-radius: 4px;
  background-color: #9b9d9d;
}

.scroll-h span {
  width: 76%;
  height: 7px;
}

.window:not(.inactive) .scroll-h span {
  width: 78%;
}

/********************************************************
 * Resume page
 ********************************************************/
.paper {
  width: 410px;
  min-height: 531px;
  padding: 37px 44px 0 43px;
  border: 2px solid #00f;
  background-color: #fff;
  box-shadow: 0 0 0 1px #fff, 0 0 0 2px #b9b9b9, 1px 2px 6px rgba(0,0,0,0.4);
  color: #444;
  font-size: 7px;
  line-height: 9px;
  white-space: nowrap;
}

.row {
  display: grid;
  grid-template-columns: 99px 1fr;
  align-items: start;
}

.side {
  padding-left: 2px;
}

.intro {
  padding-bottom: 1px;
}

.contact p + p {
  margin-top: 6px;
}

.contact b {
  color: #2bb673;
  font-weight: 400;
}

.contact a {
  color: #231f20;
}

.about {
  padding-left: 1px;
}

.about h2 {
  margin-bottom: 10px;
  color: #2bb673;
  font-family: "DejaVu Sans Condensed", "DejaVu Sans", sans-serif;
  font-size: 16px;
  line-height: 20px;
}

.heading {
  height: 12px;
  margin: 12px 0 9px;
}

.heading h3 {
  display: flex;
  color: #2bb673;
  font-family: "DejaVu Sans", sans-serif;
  font-size: 9px;
  letter-spacing: 3px;
  line-height: 12px;
}

.rule {
  flex: 1;
  height: 1px;
  margin-top: 9px;
  background: repeating-linear-gradient(90deg, #555 0 2px, #bbb 2px 3px);
}

.heading > .rule {
  margin-right: 18px;
}

.education-heading {
  margin-bottom: 12px;
}

.education-heading .rule {
  margin-top: 7px;
}

/* the rule runs through the end of the title */
.skills-heading {
  position: relative;
  margin-bottom: 14px;
}

.skills-heading .rule {
  position: absolute;
  right: 0;
  width: 84px;
  margin-top: 7px;
}

.job + .job {
  margin-top: 14px;
}

.school + .school {
  margin-top: 18px;
}

.job .side,
.school .side {
  color: #808285;
}

.school .side {
  line-height: 10px;
}

.text {
  padding-top: 3px;
  font-family: Roboto, sans-serif;
  line-height: 8px;
}

.school .text {
  padding-top: 2px;
}

.languages {
  line-height: 13px;
}

.skills {
  display: grid;
  grid-template-columns: 56px 60px 54px 50px;
  padding: 2px 0 0 1px;
  line-height: 13px;
}

.stars {
  width: 47px;
  display: flex;
  align-items: center;
  justify-content: flex-end;
  gap: 3px;
}

.stars:nth-child(4n) {
  width: 51px;
}

.stars svg {
  width: 7px;
  height: 7px;
  color: #2bb673;
}

.stars svg.dim {
  color: #6d6e71;
}

.stars.wide {
  gap: 4px;
}

.stars.tight {
  justify-content: flex-start;
  gap: 2px;
}

/* slightly smaller page of the 49% window */
.paper-49 {
  width: 400px;
  min-height: 518px;
  padding: 37px 43px 0 42px;
}

.paper-49 .row {
  grid-template-columns: 97px 1fr;
}

.paper-49 .intro {
  padding-bottom: 0;
}

.paper-49 .contact p + p {
  margin-top: 5px;
}

.paper-49 .about h2 {
  margin-bottom: 9px;
  font-family: "DejaVu Sans", sans-serif;
  font-size: 14px;
}

.paper-49 .heading {
  margin-bottom: 8px;
}

.paper-49 .heading h3 {
  font-family: "DejaVu Sans Condensed", "DejaVu Sans", sans-serif;
}

.paper-49 .education-heading {
  margin-bottom: 12px;
}

.paper-49 .skills-heading {
  margin-bottom: 13px;
}

.paper-49 .job + .job {
  margin-top: 13px;
}

.paper-49 .school + .school {
  margin-top: 17px;
}

.paper-49 .text {
  padding-top: 2px;
}

.paper-49 .skills {
  grid-template-columns: 56px 58px 52px 50px;
  padding-left: 0;
}

/********************************************************
 * Status bar
 ********************************************************/
.statusbar {
  height: 24px;
  flex: none;
  display: flex;
  padding-bottom: 2px;
  border-top: 1px solid #a8a8a8;
  font-size: 12px;
  line-height: 18px;
}

.cell {
  width: 30px;
  height: 19px;
  margin-top: 2px;
  display: flex;
  align-items: center;
  justify-content: center;
  border-left: 1px solid #a1a1a1;
}

.cell.page-count {
  width: 78px;
  padding-left: 11px;
  justify-content: flex-start;
  border-left: none;
}

.cell.narrow {
  width: 21px;
}

.statusbar-49 .cell.narrow {
  width: 23px;
}

.cell.fill {
  flex: 1;
}

.cell.language {
  width: 69px;
}

.cell.layout {
  width: 78px;
  padding-left: 2px;
  gap: 6px;
  color: #888;
}

.current {
  display: flex;
  gap: 2px;
  color: #444;
}

.cell.zoom-slider {
  width: 144px;
  gap: 6px;
}

.cell.percent {
  width: 52px;
}

.statusbar-49 .cell.percent {
  width: 44px;
}

.zoom-out,
.zoom-in {
  width: 8px;
  height: 8px;
  background: linear-gradient(#888, #888) center / 8px 2px no-repeat;
}

.zoom-in {
  background: linear-gradient(#888, #888) center / 8px 2px no-repeat, linear-gradient(#888, #888) center / 2px 8px no-repeat;
}

.zoom-slider input {
  width: 98px;
  height: 10px;
  margin: 0;
  appearance: none;
  background: linear-gradient(#aaa, #aaa) center / 100% 2px no-repeat, linear-gradient(#aaa, #aaa) center / 2px 10px no-repeat;
}

.zoom-slider input::-webkit-slider-thumb {
  appearance: none;
  width: 8px;
  height: 8px;
  border: 1px solid #888;
  border-radius: 50%;
  background-color: #fff;
}
```
